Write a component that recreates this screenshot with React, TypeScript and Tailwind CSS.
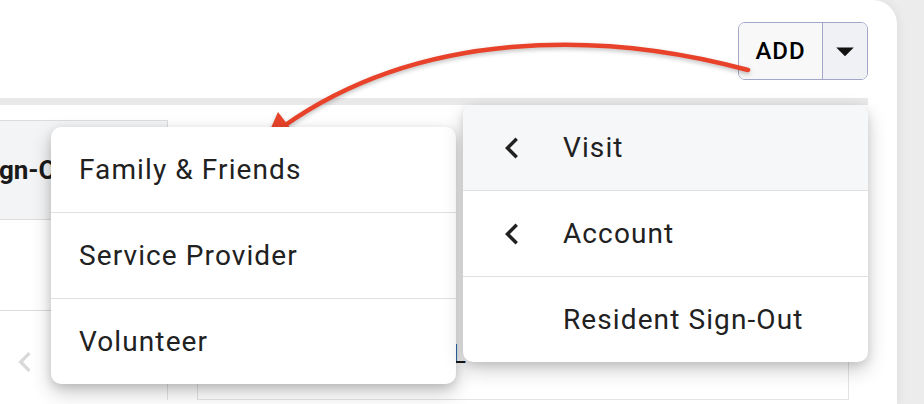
import React from "react";

const font = { fontFamily: "Roboto, 'Noto Sans', sans-serif" };

const ChevronLeft = ({ className = "" }: { className?: string }) => (
  <svg viewBox="0 0 24 24" className={className} fill="currentColor">
    <path d="M15.41 7.41 14 6l-6 6 6 6 1.41-1.41L10.83 12z" />
  </svg>
);

const itemText = "text-[28px] leading-none tracking-[1.1px] text-[#212121]";

const visitorTypes = ["Family & Friends", "Service Provider", "Volunteer"];

const addItems = [
  { label: "Visit", sub: true, active: true },
  { label: "Account", sub: true, active: false },
  { label: "Resident Sign-Out", sub: false, active: false },
];

const SubMenu: React.FC = () => (
  <div className="absolute left-[51px] top-[127px] w-[405px] bg-white rounded-[10px] shadow-[0_8px_20px_rgba(0,0,0,0.22),0_3px_8px_rgba(0,0,0,0.12)] overflow-hidden">
    {visitorTypes.map((t, i) => (
      <div key={t} className={i > 0 ? "border-t border-[#e0e0e0]" : ""}>
        <div className="h-[85px] flex items-center pl-[28px]">
          <span className={itemText}>{t}</span>
        </div>
      </div>
    ))}
  </div>
);

const AddMenu: React.FC = () => (
  <div className="absolute left-[463px] top-[105px] w-[405px] bg-white rounded-[10px] shadow-[0_8px_20px_rgba(0,0,0,0.2),0_3px_8px_rgba(0,0,0,0.1)] overflow-hidden">
    {addItems.map((it, i) => (
      <div
        key={it.label}
        className={`${i > 0 ? "border-t border-[#e0e0e0]" : ""} ${it.active ? "bg-[#f6f7f9]" : ""}`}
      >
        <div className="h-[85px] flex items-center pl-[28px]">
          <div className="w-[72px] flex items-center">
            {it.sub && <ChevronLeft className="w-[42px] h-[42px] text-[#212121]" />}
          </div>
          <span className={itemText}>{it.label}</span>
        </div>
      </div>
    ))}
  </div>
);

const Arrow: React.FC = () => (
  <svg
    className="absolute left-0 top-0 w-[924px] h-[404px] pointer-events-none drop-shadow-[0_2px_2px_rgba(0,0,0,0.25)]"
    viewBox="0 0 924 404"
  >
    <path
      d="M748 70 C600 30, 420 30, 284 126"
      fill="none"
      stroke="#e8432a"
      strokeWidth="4.5"
      strokeLinecap="round"
    />
    <polygon points="267,137 278,112 294,133" fill="#e8432a" />
  </svg>
);

export default function App() {
  return (
    <div className="relative w-[924px] h-[404px] overflow-hidden bg-[#ececec] flex" style={font}>
      <div className="w-[897px] h-full bg-white rounded-tr-[24px] shadow-[2px_0_10px_rgba(0,0,0,0.06)] flex flex-col">
        {/* toolbar */}
        <div className="pt-[22px] pr-[29px] flex justify-end">
          <div className="flex h-[58px] border border-[#a3a6c9] rounded-[7px] overflow-hidden">
            <div className="w-[83px] bg-[#f8f8f9] flex items-center justify-center text-[24px] font-medium tracking-[1px] text-black">
              ADD
            </div>
            <div className="w-[45px] bg-[#f0f1f4] border-l border-[#a3a6c9] flex items-center justify-center">
              <svg viewBox="0 0 24 24" className="w-[42px] h-[42px]">
                <path d="m7 10 5 5 5-5z" fill="#111" />
              </svg>
            </div>
          </div>
        </div>
        <div className="mt-[18px] mr-[29px] h-[7px] bg-[#e9e9e9]" />

        {/* table behind the menus */}
        <div className="pt-[15px] flex flex-col">
          <div className="flex h-[100px]">
            <div className="w-[168px] bg-[#f3f4f6] border-y border-r border-[#dcdcdc] flex items-center overflow-hidden">
              <span className="-ml-[24px] text-[26px] font-bold text-[#1a1a1a] whitespace-nowrap">Sign-Out</span>
            </div>
          </div>
          <div className="flex h-[91px]">
            <div className="w-[168px] border-b border-[#dcdcdc]" />
          </div>
          <div className="flex h-[89px]">
            <div className="w-[168px] border-r border-[#e3e3e3] flex items-end pb-[18px] pl-[5px]">
              <ChevronLeft className="w-[40px] h-[40px] text-[#d9d9d9]" />
            </div>
            <div className="w-[30px] border-r border-[#e3e3e3]" />
            <div className="w-[651px] border-r border-b border-[#e3e3e3] pl-[254px] pt-[24px]">
              <span className="text-[26px] text-[#1a1a1a]">L</span>
            </div>
          </div>
        </div>
      </div>

      <Arrow />
      <SubMenu />
      <AddMenu />
    </div>
  );
}
